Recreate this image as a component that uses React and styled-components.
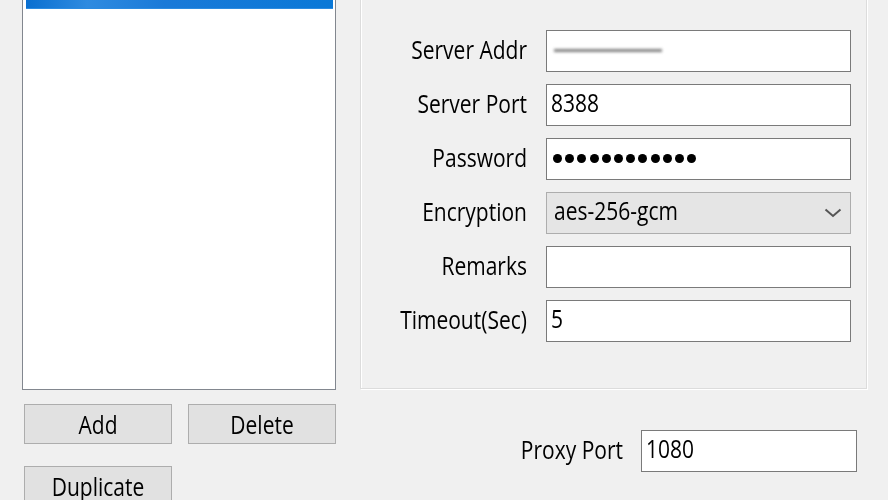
import React from "react";
import styled, { createGlobalStyle } from "styled-components";

const GlobalStyle = createGlobalStyle`
  html, body {
    margin: 0;
    padding: 0;
    background: #f0f0f0;
    overflow: hidden;
  }
  body {
    font-family: "Open Sans", "Noto Sans", sans-serif;
    color: #000;
  }
`;

const Window = styled.div`
  width: 888px;
  height: 500px;
  overflow: hidden;
  background: #f0f0f0;
`;

const Page = styled.div`
  display: flex;
  gap: 24px;
  margin-top: -30px;
  padding-left: 22px;
`;

const LeftColumn = styled.div`
  display: flex;
  flex-direction: column;
  width: 314px;
`;

const ListBox = styled.div`
  height: 420px;
  background: #fff;
  border: 1px solid #82878f;
  padding: 3px 2px 0 3px;
  box-sizing: border-box;
`;

const SelectedItem = styled.div`
  height: 35px;
  background: linear-gradient(90deg, #0a6fd0 0%, #2f8be0 20%, #1a7ad8 45%, #0a78d7 100%);
  box-shadow: inset 0 -1px 0 #2c8be0;
`;

const ButtonGrid = styled.div`
  display: grid;
  grid-template-columns: 148px 148px;
  column-gap: 16px;
  row-gap: 22px;
  margin-top: 14px;
  padding-left: 2px;
`;

const Button = styled.div`
  height: 40px;
  box-sizing: border-box;
  background: #e1e1e1;
  border: 1px solid #adadad;
  display: flex;
  align-items: center;
  justify-content: center;
  font-size: 21px;
`;

const Tall = styled.span`
  display: inline-block;
  transform: scaleY(1.2);
  transform-origin: center;
  white-space: nowrap;
`;

const RightColumn = styled.div`
  display: flex;
  flex-direction: column;
  width: 507px;
`;

const GroupBox = styled.div`
  height: 419px;
  box-sizing: border-box;
  border: 1px solid #dcdcdc;
  box-shadow: inset 1px 1px 0 #fff, 1px 1px 0 #fff;
  padding: 59px 16px 0 16px;
`;

const FormGrid = styled.div`
  display: grid;
  grid-template-columns: 150px 305px;
  column-gap: 19px;
  row-gap: 12px;
  align-items: center;
`;

const Label = styled.div`
  text-align: right;
  font-size: 21px;
  margin-top: -4px;
`;

const Field = styled.div`
  height: 42px;
  box-sizing: border-box;
  background: ${(p) => (p.combo ? "#e5e5e5" : "#fff")};
  border: 1px solid ${(p) => (p.combo ? "#adadad" : "#7a7a7a")};
  display: flex;
  align-items: center;
  padding-left: ${(p) => (p.combo ? "7px" : "4px")};
  padding-right: 8px;
  font-size: 21px;
  position: relative;
  width: ${(p) => p.width || "auto"};
`;

const FieldText = styled(Tall)`
  margin-top: -6px;
`;

const Blurred = styled.div`
  width: 108px;
  height: 3px;
  margin-top: -2px;
  background: #555;
  filter: blur(1.4px);
  opacity: 0.75;
  margin-left: 3px;
`;

const Dots = styled.div`
  display: flex;
  gap: 3.2px;
  margin-left: 2px;
  margin-top: -2px;
`;

const Dot = styled.span`
  width: 9px;
  height: 9px;
  border-radius: 50%;
  background: #000;
`;

const Chevron = styled.svg`
  margin-left: auto;
  margin-right: 0;
`;

const ProxyRow = styled.div`
  display: flex;
  align-items: center;
  justify-content: flex-end;
  gap: 18px;
  margin-top: 41px;
  margin-right: 10px;
`;

function App() {
  return (
    <Window>
      <GlobalStyle />
      <Page>
        <LeftColumn>
          <ListBox>
            <SelectedItem />
          </ListBox>
          <ButtonGrid>
            <Button><Tall>Add</Tall></Button>
            <Button><Tall>Delete</Tall></Button>
            <Button><Tall>Duplicate</Tall></Button>
          </ButtonGrid>
        </LeftColumn>
        <RightColumn>
          <GroupBox>
            <FormGrid>
              <Label><Tall>Server Addr</Tall></Label>
              <Field>
                <Blurred />
              </Field>
              <Label><Tall>Server Port</Tall></Label>
              <Field><FieldText>8388</FieldText></Field>
              <Label><Tall>Password</Tall></Label>
              <Field>
                <Dots>
                  {Array.from({ length: 12 }).map((_, i) => (
                    <Dot key={i} />
                  ))}
                </Dots>
              </Field>
              <Label><Tall>Encryption</Tall></Label>
              <Field combo>
                <FieldText>aes-256-gcm</FieldText>
                <Chevron width="18" height="10" viewBox="0 0 18 10">
                  <path d="M1.5 1.5 L9 8 L16.5 1.5" fill="none" stroke="#555" strokeWidth="2" />
                </Chevron>
              </Field>
              <Label><Tall>Remarks</Tall></Label>
              <Field />
              <Label><Tall>Timeout(Sec)</Tall></Label>
              <Field><FieldText>5</FieldText></Field>
            </FormGrid>
          </GroupBox>
          <ProxyRow>
            <Label><Tall>Proxy Port</Tall></Label>
            <Field width="216px"><FieldText>1080</FieldText></Field>
          </ProxyRow>
        </RightColumn>
      </Page>
    </Window>
  );
}

export default App;
